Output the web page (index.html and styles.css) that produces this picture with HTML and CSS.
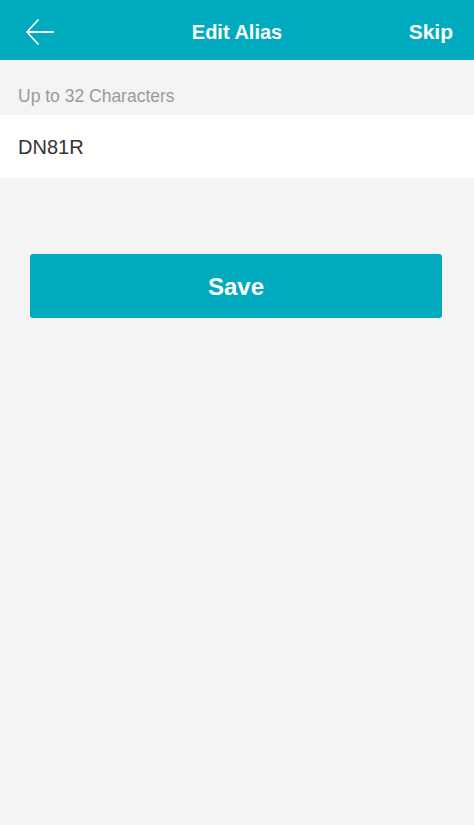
FILE: index.html
```html
<!DOCTYPE html>
<html>
<head>
<meta charset="utf-8">
<link rel="stylesheet" href="styles.css">
</head>
<body>
<div class="app">
  <header class="topbar">
    <span class="back">
      <svg width="30" height="28" viewBox="0 0 30 28" fill="none" stroke="#fff" stroke-width="1.8" stroke-linecap="round" stroke-linejoin="round">
        <path d="M28 14H2M13 2L2 14l11 12"/>
      </svg>
    </span>
    <h1 class="title">Edit Alias</h1>
    <span class="skip">Skip</span>
  </header>
  <div class="hint">Up to 32 Characters</div>
  <div class="field">DN81R</div>
  <div class="actions">
    <button class="save">Save</button>
  </div>
</div>
</body>
</html>
```
FILE: styles.css
```css
html, body {
  margin: 0;
  padding: 0;
  background: #f4f4f4;
  font-family: "Liberation Sans", Arial, sans-serif;
}
.app {
  width: 474px;
  min-height: 825px;
  background: #f4f4f4;
}
.topbar {
  height: 60px;
  background: #00aabf;
  display: grid;
  grid-template-columns: 1fr auto 1fr;
  align-items: center;
  padding: 4px 21px 0 21px;
  box-sizing: border-box;
  color: #fff;
}
.back {
  display: flex;
  align-items: center;
  margin-left: 4px;
}
.title {
  margin: 0;
  font-size: 20px;
  font-weight: bold;
  text-align: center;
}
.skip {
  text-align: right;
  font-size: 21px;
  font-weight: bold;
}
.hint {
  height: 55px;
  box-sizing: border-box;
  padding: 26px 0 0 18px;
  font-size: 17.5px;
  color: #9a9a9a;
}
.field {
  height: 63px;
  background: #fff;
  display: flex;
  align-items: center;
  padding: 2px 0 0 18px;
  box-sizing: border-box;
  font-size: 20px;
  color: #333;
}
.actions {
  padding: 76px 32px 0 30px;
}
.save {
  display: block;
  width: 100%;
  height: 64px;
  border: 0;
  border-radius: 3px;
  background: #00aabf;
  color: #fff;
  font-family: "Liberation Sans", Arial, sans-serif;
  font-size: 24px;
  font-weight: bold;
  padding-top: 2px;
}
```
